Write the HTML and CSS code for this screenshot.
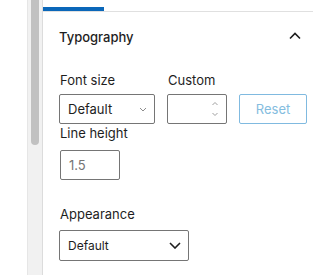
FILE: index.html
```html
<!DOCTYPE html>
<html lang="en">
<head>
<meta charset="utf-8">
<title>Typography</title>
<link rel="stylesheet" href="styles.css">
</head>
<body>
<div class="page">
  <div class="gutter"></div>
  <div class="track"><div class="thumb"></div></div>
  <div class="panel">
    <div class="tabs"><div class="tab-active"></div></div>
    <div class="section">
      <div class="section-head">
        <span class="title">Typography</span>
        <svg class="chev-up" width="24" height="10" viewBox="0 0 24 10" aria-hidden="true">
          <path d="M7 7.5 L12 2.5 L17 7.5" fill="none" stroke="#1e1e1e" stroke-width="1.6"/>
        </svg>
      </div>
      <div class="row">
        <div class="field">
          <div class="label">Font size</div>
          <div class="control select select-fs">
            <span>Default</span>
            <svg width="8" height="5" viewBox="0 0 8 5" aria-hidden="true">
              <path d="M1 1 L4 4 L7 1" fill="none" stroke="#8c8c8c" stroke-width="1"/>
            </svg>
          </div>
        </div>
        <div class="field">
          <div class="label">Custom</div>
          <div class="control number">
            <svg width="8" height="16" viewBox="0 0 8 16" aria-hidden="true">
              <path d="M1.5 4 L4 1.5 L6.5 4" fill="none" stroke="#a0a0a0" stroke-width="1"/>
              <path d="M1.5 12 L4 14.5 L6.5 12" fill="none" stroke="#a0a0a0" stroke-width="1"/>
            </svg>
          </div>
        </div>
        <div class="field">
          <div class="control reset">Reset</div>
        </div>
      </div>
      <div class="label label-lh">Line height</div>
      <div class="control lh">1.5</div>
      <div class="label label-app">Appearance</div>
      <div class="control select select-app">
        <span>Default</span>
        <svg width="12" height="7" viewBox="0 0 12 7" aria-hidden="true">
          <path d="M1 1 L6 6 L11 1" fill="none" stroke="#1e1e1e" stroke-width="1.6"/>
        </svg>
      </div>
    </div>
  </div>
</div>
</body>
</html>
```

FILE: styles.css
```css
* { box-sizing: border-box; }
html, body {
  margin: 0;
  padding: 0;
  background: #fff;
}
body {
  font-family: Inter, "Noto Sans", "Liberation Sans", sans-serif;
  color: #1e1e1e;
  width: 313px;
  height: 275px;
  overflow: hidden;
}
.page {
  display: flex;
  height: 275px;
}
.gutter {
  width: 27px;
  flex: none;
  background: #fff;
}
.track {
  width: 16px;
  flex: none;
  background: #f1f1f1;
  border-left: 1px solid #e6e6e6;
  border-right: 1px solid #dcdcdc;
  padding-left: 3px;
}
.thumb {
  width: 8px;
  height: 145px;
  background: #c1c1c1;
  border-radius: 0 0 4px 4px;
}
.panel {
  flex: 1;
  display: flex;
  flex-direction: column;
}
.tabs {
  height: 12px;
  border-bottom: 1px solid #e0e0e0;
  padding-top: 7px;
}
.tab-active {
  width: 61px;
  height: 4px;
  background: #0a67b9;
}
.section {
  padding: 17px 6px 0 16px;
}
.section-head {
  display: flex;
  justify-content: space-between;
  align-items: center;
  height: 16px;
}
.title {
  font-size: 13px;
  font-weight: 500;
  line-height: 16px;
}
.chev-up {
  display: block;
  margin-top: -2px;
}
.row {
  display: flex;
  align-items: flex-end;
  gap: 12px;
  margin-top: 27px;
}
.label {
  font-size: 13px;
  line-height: 16px;
  margin-bottom: 6px;
  padding-left: 1px;
}
.control {
  height: 30px;
  border: 1px solid #757575;
  border-radius: 2px;
  display: flex;
  align-items: center;
  font-size: 13px;
}
.select {
  justify-content: space-between;
  padding: 0 7px 0 8px;
}
.select svg { display: block; }
.select-fs { width: 96px; }
.number {
  width: 60px;
  justify-content: flex-end;
  padding-right: 7px;
}
.number svg { display: block; }
.reset {
  width: 68px;
  justify-content: center;
  border-color: #80bae0;
  color: #84bde0;
}
.label-lh {
  margin-top: 1px;
  margin-bottom: 9px;
}
.lh {
  width: 60px;
  margin-left: 1px;
  padding-left: 8px;
  color: #757575;
}
.label-app {
  margin-top: 26px;
  margin-bottom: 8px;
}
.select-app {
  width: 130px;
  height: 31px;
  font-size: 12px;
}
```
